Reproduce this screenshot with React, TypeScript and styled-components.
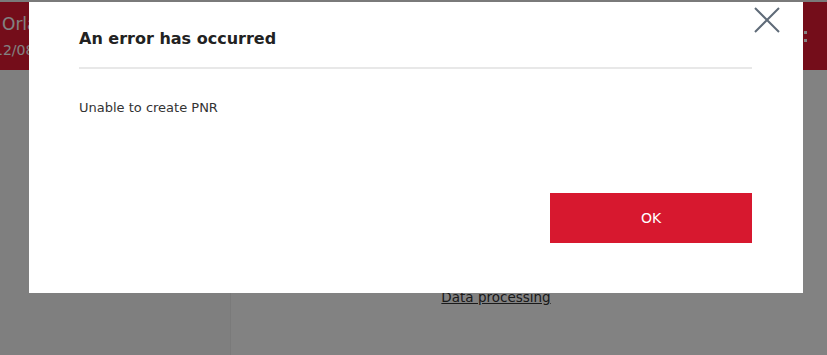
import React from 'react';
import styled, { createGlobalStyle } from 'styled-components';

const GlobalStyle = createGlobalStyle`
  html, body {
    margin: 0;
    padding: 0;
    height: 100%;
    overflow: hidden;
  }
  body {
    font-family: "DejaVu Sans", Verdana, sans-serif;
    background: #ffffff;
  }
`;

const Page = styled.div`
  display: flex;
  flex-direction: column;
  height: 355px;
  border-top: 2px solid #f0f0f0;
  box-sizing: border-box;
`;

const Header = styled.header`
  display: flex;
  justify-content: space-between;
  align-items: center;
  height: 68px;
  background: #e41a33;
  color: #ffffff;
`;

const Trip = styled.div`
  display: flex;
  flex-direction: column;
  gap: 6px;
  margin-left: -6px;
`;

const City = styled.span`
  font-size: 17px;
  line-height: 22px;
  margin-left: 8px;
`;

const Dates = styled.span`
  font-size: 14px;
  line-height: 18px;
`;

const Kebab = styled.div`
  display: flex;
  flex-direction: column;
  gap: 5px;
  margin-right: 20px;
`;

const Dot = styled.span`
  width: 3px;
  height: 3px;
  background: #ffffff;
`;

const Content = styled.div`
  display: flex;
  flex: 1;
`;

const Side = styled.aside`
  width: 230px;
  background: #f9f9f9;
  border-right: 1px solid #f0f0f0;
`;

const Main = styled.main`
  flex: 1;
  display: flex;
  justify-content: center;
  padding-top: 219px;
  background: #ffffff;
`;

const Link = styled.a`
  font-size: 13.5px;
  color: #333333;
  text-decoration: underline;
  margin-right: 66px;
  height: 18px;
`;

const Overlay = styled.div`
  position: fixed;
  inset: 0;
  background: rgba(0, 0, 0, 0.49);
  display: flex;
  justify-content: flex-start;
  align-items: flex-start;
  padding: 2px 0 0 29px;
`;

const Modal = styled.div`
  position: relative;
  width: 774px;
  height: 291px;
  box-sizing: border-box;
  background: #ffffff;
  padding: 27px 51px 0 50px;
  display: flex;
  flex-direction: column;
`;

const Title = styled.h2`
  margin: 0;
  font-size: 16px;
  line-height: 20px;
  font-weight: bold;
  color: #222222;
  padding-bottom: 18px;
  border-bottom: 2px solid #e8e8e8;
`;

const Message = styled.p`
  margin: 30px 0 0;
  font-size: 13px;
  line-height: 18px;
  color: #333333;
`;

const Actions = styled.div`
  display: flex;
  justify-content: flex-end;
  margin-top: 76px;
`;

const OkButton = styled.button`
  width: 202px;
  height: 50px;
  border: none;
  background: #d7182f;
  color: #ffffff;
  font-family: "DejaVu Sans", Verdana, sans-serif;
  font-size: 14px;
  cursor: pointer;
`;

const Close = styled.button`
  position: absolute;
  top: 4px;
  right: 22px;
  width: 28px;
  height: 28px;
  padding: 0;
  border: none;
  background: transparent;
  cursor: pointer;
`;

export default function App() {
  return (
    <>
      <GlobalStyle />
      <Page>
        <Header>
          <Trip>
            <City>Orlando</City>
            <Dates>12/08/2024</Dates>
          </Trip>
          <Kebab>
            <Dot />
            <Dot />
          </Kebab>
        </Header>
        <Content>
          <Side />
          <Main>
            <Link>Data processing</Link>
          </Main>
        </Content>
      </Page>
      <Overlay>
        <Modal>
          <Close aria-label="Close">
            <svg width="28" height="28" viewBox="0 0 28 28">
              <path d="M2 2 L26 26 M26 2 L2 26" stroke="#5f6b78" strokeWidth="2" fill="none" />
            </svg>
          </Close>
          <Title>An error has occurred</Title>
          <Message>Unable to create PNR</Message>
          <Actions>
            <OkButton>OK</OkButton>
          </Actions>
        </Modal>
      </Overlay>
    </>
  );
}
